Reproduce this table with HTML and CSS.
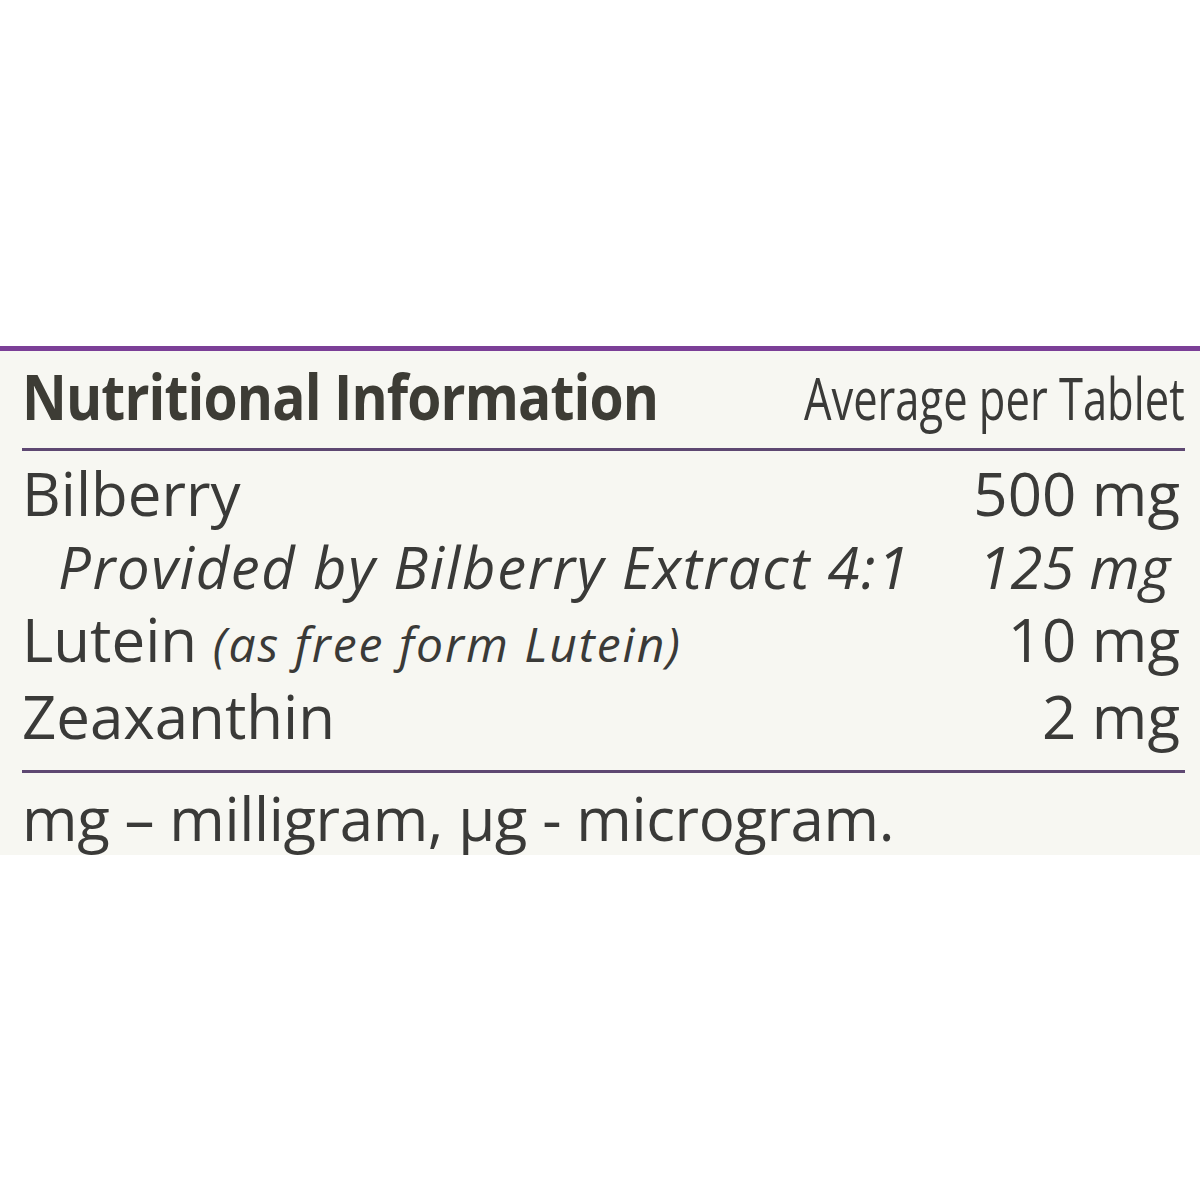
FILE: index.html
```html
<!DOCTYPE html>
<html lang="en">
<head>
<meta charset="utf-8">
<title>Nutritional Information</title>
<link rel="stylesheet" href="styles.css">
</head>
<body>
<div class="panel">
  <div class="head">
    <h1 class="title"><span class="title-text">Nutritional Information</span></h1>
    <div class="avg"><span class="avg-text">Average per Tablet</span></div>
  </div>
  <div class="rows">
    <div class="row"><span class="name">Bilberry</span><span class="val">500 mg</span></div>
    <div class="row sub"><span class="name">Provided by Bilberry Extract 4:1</span><span class="val">125 mg</span></div>
    <div class="row"><span class="name">Lutein <em class="note">(as free form Lutein)</em></span><span class="val">10 mg</span></div>
    <div class="row"><span class="name">Zeaxanthin</span><span class="val">2 mg</span></div>
  </div>
  <div class="foot">mg – milligram, µg - microgram.</div>
</div>
</body>
</html>
```
FILE: styles.css
```css
html, body {
  margin: 0;
  padding: 0;
  background: #ffffff;
}
body {
  font-family: "Open Sans", "Liberation Sans", sans-serif;
  color: #3a3a38;
}
.panel {
  margin-top: 346px;
  height: 509px;
  box-sizing: border-box;
  background: #f7f7f2;
  border-top: 5px solid #7b3f97;
  padding: 9px 15px 0 22px;
}
.head {
  display: flex;
  justify-content: space-between;
  align-items: baseline;
  border-bottom: 3px solid #5e4872;
  padding-bottom: 14px;
}
.title {
  margin: 0;
  flex: 0 0 auto;
  width: 640px;
  font-size: 62px;
  line-height: 72px;
  font-weight: 700;
  color: #3d3c35;
  white-space: nowrap;
}
.title-text {
  display: inline-block;
  letter-spacing: -1px;
  transform: scaleX(0.89);
  transform-origin: left center;
}
.avg {
  flex: 0 0 auto;
  width: 380px;
  display: flex;
  justify-content: flex-end;
  font-size: 58px;
  line-height: 72px;
  white-space: nowrap;
}
.avg-text {
  flex: 0 0 auto;
  display: inline-block;
  transform: scaleX(0.75);
  transform-origin: right center;
}
.rows {
  padding-top: 6px;
  padding-bottom: 17px;
  border-bottom: 3px solid #5e4872;
}
.row {
  display: flex;
  justify-content: space-between;
  font-size: 60px;
  line-height: 73px;
  padding-right: 5px;
  white-space: nowrap;
}
.sub {
  font-style: italic;
  font-size: 58px;
  letter-spacing: 1.6px;
  padding-left: 36px;
  padding-right: 15px;
}
.sub .val {
  letter-spacing: 0;
}
.note {
  font-size: 48px;
  letter-spacing: 2px;
}
.foot {
  padding-top: 9px;
  font-size: 60px;
  line-height: 73px;
  letter-spacing: -0.4px;
  white-space: nowrap;
}
```
